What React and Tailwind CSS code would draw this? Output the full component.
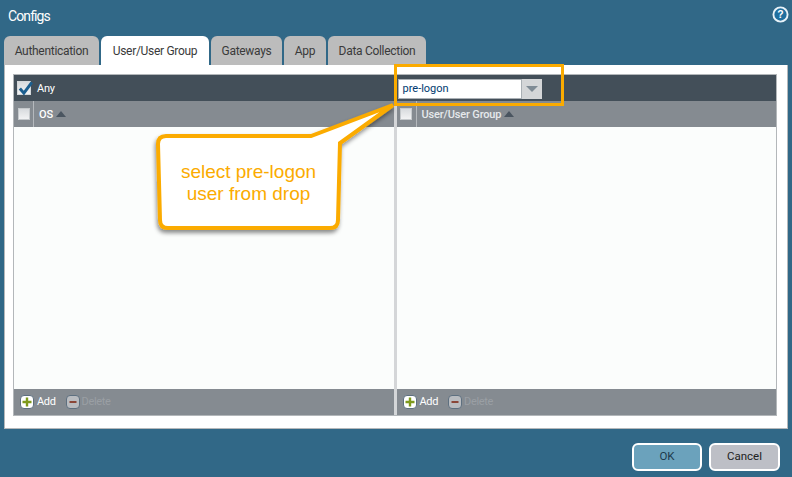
const font = { fontFamily: '"Roboto", "Liberation Sans", sans-serif' };

function Tab({ label, active, className }) {
  return (
    <div className={`h-[29px] flex items-center justify-center rounded-t-[6px] text-[12px] tracking-[-0.3px] text-[#3a3a3a] ${active ? 'bg-white' : 'bg-[#bcbcbc]'} ${className}`}>
      {label}
    </div>
  );
}

function Check({ checked }) {
  return (
    <div className={`relative shrink-0 border bg-gradient-to-b from-[#d8dbde] to-[#f2f3f4] ${checked ? 'w-[14px] h-[14px] border-[#d4d8db]' : 'w-[12px] h-[12px] border-[#c5c9cc]'}`}>
      {checked && (
        <svg viewBox="0 0 14 14" className="absolute -left-[1px] -top-[2px] w-[16px] h-[16px] overflow-visible">
          <path d="M2.5 7.5 L6 11.5 L13 2" fill="none" stroke="#1b5e8f" strokeWidth="2.6" />
        </svg>
      )}
    </div>
  );
}

function Arrow() {
  return <div className="w-0 h-0 border-x-[5px] border-x-transparent border-b-[6px] border-b-[#4a5560]" />;
}

function RoundIcon({ kind }) {
  const add = kind === 'add';
  return (
    <div className={`w-[14px] h-[14px] rounded-[4px] border border-[#5e7080] flex items-center justify-center ${add ? 'bg-white' : 'bg-[#b9bcc0]'}`}>
      <svg viewBox="0 0 12 12" className="w-[12px] h-[12px]">
        {add ? (
          <path d="M6 1.5v9M1.5 6h9" stroke="#7f9a1c" strokeWidth="2.4" />
        ) : (
          <path d="M2.5 6h7" stroke="#8a4638" strokeWidth="2" />
        )}
      </svg>
    </div>
  );
}

function Footer() {
  return (
    <div className="h-[26px] bg-[#858b91] flex items-center pl-[6px] text-[11px] tracking-[-0.35px]">
      <RoundIcon kind="add" />
      <span className="ml-[3px] text-white">Add</span>
      <div className="ml-[10px]"><RoundIcon kind="del" /></div>
      <span className="ml-[2px] text-[#9a9fa4]">Delete</span>
    </div>
  );
}

function Column({ title, top, titleClass }) {
  return (
    <div className="flex-1 flex flex-col min-w-0">
      <div className="h-[26px] bg-[#434f59] flex items-center">{top}</div>
      <div className={`h-[26px] bg-[#858b91] flex items-center text-[11px] tracking-[-0.15px] font-medium ${titleClass}`}>
        <div className="w-[20px] h-full flex items-center justify-center border-r border-[#b5b9bd]">
          <Check />
        </div>
        <span className="ml-[5px] pt-[2px]">{title}</span>
        <div className="ml-[3px]"><Arrow /></div>
      </div>
      <div className="flex-1 bg-[#fbfdfc]" />
      <Footer />
    </div>
  );
}

export default function App() {
  return (
    <div className="relative w-[792px] h-[477px] bg-[#316887] overflow-hidden flex flex-col" style={font}>
      <div className="h-[36px] pl-[8px] pt-[7px] text-[14px] leading-[18px] text-white tracking-[-0.9px]">Configs</div>
      <svg viewBox="0 0 18 18" className="absolute left-[772px] top-[6px] w-[17px] h-[17px]">
        <circle cx="9" cy="9" r="7.5" fill="#1f6f9f" stroke="#e8f2f8" strokeWidth="2" />
        <text x="9" y="13" fontSize="11" fontWeight="700" textAnchor="middle" fill="#fff" fontFamily="Liberation Sans">?</text>
      </svg>

      <div className="flex pl-[4px] gap-[2px]">
        <Tab label="Authentication" className="w-[95px]" />
        <Tab label="User/User Group" active className="w-[108px]" />
        <Tab label="Gateways" className="w-[71px]" />
        <Tab label="App" className="w-[42px]" />
        <Tab label="Data Collection" className="w-[98px]" />
      </div>

      <div className="ml-[4px] w-[784px] h-[364px] bg-white border-b border-r border-l border-[#b5b8ba] pt-[9px] pl-[8px] pr-[10px]">
        <div className="h-[342px] flex gap-[3px] border border-[#b3b7ba] bg-[#d4d6d8]">
          <Column
            title="OS"
            titleClass="text-white"
            top={
              <div className="flex items-center pl-[3px]">
                <Check checked />
                <span className="ml-[6px] pt-[2px] text-[11px] tracking-[-0.3px] text-white">Any</span>
              </div>
            }
          />
          <Column
            title="User/User Group"
            titleClass="text-[#e6e9ec]"
            top={
              <div className="flex items-center pl-[1px] h-[20px] mt-[2px]">
                <div className="w-[124px] h-[20px] bg-white border border-[#aab0b5] flex items-center pl-[4px] pt-[1px] text-[11px] text-[#003a70]">pre-logon</div>
                <div className="w-[20px] h-[20px] bg-[#d4d6d8] flex items-center justify-center">
                  <div className="w-0 h-0 border-x-[6px] border-x-transparent border-t-[6px] border-t-[#7f8b95]" />
                </div>
              </div>
            }
          />
        </div>
      </div>

      <div className="flex-1 flex justify-end items-start gap-[7px] pr-[12px] pt-[14px] text-[11.5px]">
        <button className="w-[70px] h-[28px] rounded-[6px] bg-[#6ba2bc] border-2 border-white text-[#1d3a4d]">OK</button>
        <button className="w-[71px] h-[28px] rounded-[6px] bg-[#bdbfc6] border-2 border-white text-[#222]">Cancel</button>
      </div>

      <svg className="absolute left-0 top-0 w-[792px] h-[477px] pointer-events-none" viewBox="0 0 792 477">
        <defs>
          <filter id="sh" x="-20%" y="-20%" width="140%" height="140%">
            <feDropShadow dx="-1" dy="3" stdDeviation="2" floodColor="#000" floodOpacity="0.45" />
          </filter>
        </defs>
        <path
          d="M166 136 L311 136 L393 105 L340 143 L338 220 Q338 228 330 228 L168 228 Q160 228 160 220 L158 144 Q158 136 166 136 Z"
          fill="#fff"
          stroke="#fbab00"
          strokeWidth="4"
          strokeLinejoin="miter"
          filter="url(#sh)"
        />
        <rect x="395.5" y="65.5" width="167" height="39" fill="none" stroke="#fbab00" strokeWidth="3" />
      </svg>

      <div className="absolute left-[158px] top-[161px] w-[181px] text-center text-[19px] leading-[22px] text-[#fbab00]" style={{ fontFamily: '"Liberation Sans", sans-serif' }}>
        select pre-logon<br />user from drop
      </div>
    </div>
  );
}
